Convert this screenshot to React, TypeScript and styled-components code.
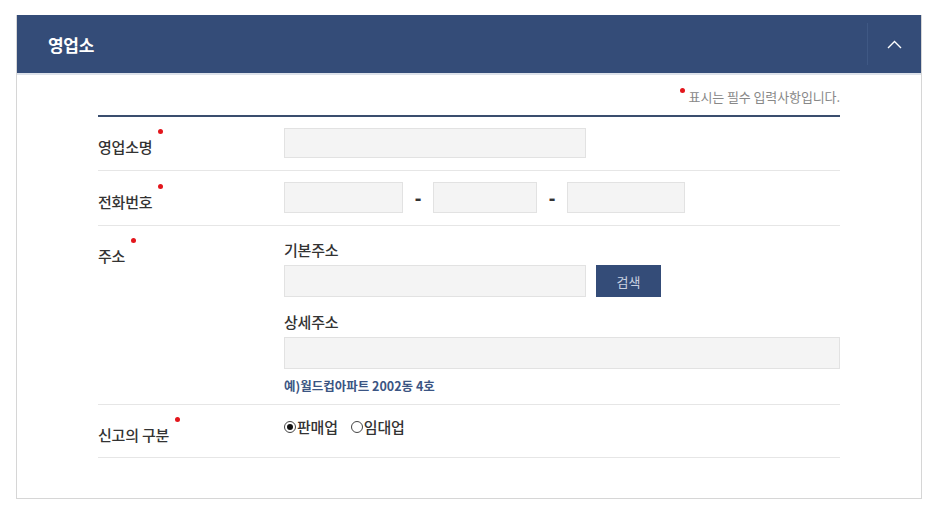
import React from 'react'
import styled, { createGlobalStyle } from 'styled-components'

const GlobalStyle = createGlobalStyle`
  html, body {
    margin: 0;
    padding: 0;
    background: #fff;
  }
  body {
    font-family: "Noto Sans CJK KR", "Noto Sans", sans-serif;
    color: #333;
  }
`

const Page = styled.div`
  padding: 15px 14px 11px 16px;
`

const Panel = styled.section`
  border: 1px solid #d6d6d6;
  border-top: none;
  background: #fff;
`

const Header = styled.header`
  display: flex;
  align-items: center;
  height: 58px;
  background: #344c78;
  border-bottom: 2px solid #dde2ea;
`

const Title = styled.h2`
  flex: 1;
  margin: 0;
  padding-left: 31px;
  font-size: 17px;
  font-weight: 700;
  color: #fff;
  letter-spacing: -0.3px;
`

const Toggle = styled.button`
  display: flex;
  align-items: center;
  justify-content: center;
  width: 54px;
  height: 42px;
  padding: 0;
  border: none;
  border-left: 1px solid #3f5884;
  background: transparent;
  cursor: pointer;
`

const ChevronUp = () => (
  <svg width="15" height="9" viewBox="0 0 15 9" fill="none">
    <polyline points="1,8 7.5,1.5 14,8" stroke="#fff" strokeWidth="1.4" />
  </svg>
)

const Body = styled.div`
  padding: 14px 81px 40px 81px;
`

const Note = styled.p`
  margin: 0 0 10px;
  text-align: right;
  font-size: 13px;
  line-height: 16px;
  color: #888;
  letter-spacing: -0.1px;
`

const Required = styled.span`
  position: relative;
  display: inline-block;
  &::after {
    content: '';
    position: absolute;
    right: -11px;
    top: -8px;
    width: 5px;
    height: 5px;
    border-radius: 50%;
    background: #e3161c;
  }
`

const NoteDot = styled.span`
  position: relative;
  display: inline-block;
  width: 5px;
  height: 5px;
  margin-right: 4px;
  top: -9px;
  border-radius: 50%;
  background: #e3161c;
`

const Table = styled.div`
  border-top: 2px solid #3a4e6e;
`

const Row = styled.div<{ $pt?: number; $pb?: number }>`
  display: grid;
  grid-template-columns: 186px 1fr;
  padding: ${p => p.$pt ?? 11}px 0 ${p => p.$pb ?? 12}px;
  border-bottom: 1px solid #e6e6e6;
`

const Label = styled.div<{ $top?: boolean }>`
  align-self: ${p => (p.$top ? 'start' : 'center')};
  padding-top: ${p => (p.$top ? 6 : 8)}px;
  font-size: 15px;
  line-height: 20px;
  font-weight: 500;
  color: #333;
  letter-spacing: -0.2px;
`

const Field = styled.div`
  display: flex;
  flex-direction: column;
`

const Line = styled.div`
  display: flex;
  align-items: center;
`

const Input = styled.input<{ $w?: number; $h?: number }>`
  box-sizing: border-box;
  width: ${p => (p.$w ? `${p.$w}px` : '100%')};
  height: ${p => p.$h ?? 30}px;
  margin: 0;
  padding: 0 8px;
  border: 1px solid #e2e2e2;
  background: #f4f4f4;
  font-family: inherit;
  font-size: 13px;
  outline: none;
`

const Dash = styled.span`
  width: 30px;
  text-align: center;
  font-family: "Liberation Sans", sans-serif;
  font-size: 20px;
  line-height: 20px;
  font-weight: 700;
  color: #333;
`

const SubLabel = styled.div<{ $mt?: number }>`
  margin-top: ${p => p.$mt ?? 0}px;
  margin-bottom: 5px;
  font-size: 15px;
  line-height: 20px;
  font-weight: 500;
  color: #333;
  letter-spacing: -0.2px;
`

const SearchButton = styled.button`
  width: 65px;
  height: 32px;
  margin-left: 10px;
  border: none;
  background: #344c78;
  color: #c9d1e0;
  font-family: inherit;
  font-size: 13px;
  cursor: pointer;
`

const Hint = styled.p`
  margin: 9px 0 0;
  font-size: 12.5px;
  line-height: 16px;
  font-weight: 700;
  color: #3b5583;
`

const RadioGroup = styled.div`
  display: flex;
  align-items: flex-start;
  gap: 13px;
  height: 28px;
`

const RadioItem = styled.label`
  display: flex;
  align-items: center;
  font-size: 15px;
  line-height: 20px;
  font-weight: 500;
  color: #333;
  letter-spacing: -0.2px;
  cursor: pointer;
`

const RadioMark = styled.span<{ $on?: boolean }>`
  box-sizing: border-box;
  position: relative;
  width: 12px;
  height: 12px;
  margin-right: 1px;
  border: 1px solid #444;
  border-radius: 50%;
  &::after {
    content: '';
    display: ${p => (p.$on ? 'block' : 'none')};
    position: absolute;
    left: 2px;
    top: 2px;
    width: 6px;
    height: 6px;
    border-radius: 50%;
    background: #111;
  }
`

export default function App() {
  const [kind, setKind] = React.useState('sale')
  return (
    <Page>
      <GlobalStyle />
      <Panel>
        <Header>
          <Title>영업소</Title>
          <Toggle aria-label="접기">
            <ChevronUp />
          </Toggle>
        </Header>
        <Body>
          <Note>
            <NoteDot />
            표시는 필수 입력사항입니다.
          </Note>
          <Table>
            <Row>
              <Label>
                <Required>영업소명</Required>
              </Label>
              <Line>
                <Input $w={302} />
              </Line>
            </Row>
            <Row>
              <Label>
                <Required>전화번호</Required>
              </Label>
              <Line>
                <Input $w={119} $h={31} />
                <Dash>-</Dash>
                <Input $w={104} $h={31} />
                <Dash>-</Dash>
                <Input $w={118} $h={31} />
              </Line>
            </Row>
            <Row $pt={14} $pb={10}>
              <Label $top>
                <Required>주소</Required>
              </Label>
              <Field>
                <SubLabel>기본주소</SubLabel>
                <Line>
                  <Input $w={302} $h={32} />
                  <SearchButton>검색</SearchButton>
                </Line>
                <SubLabel $mt={15}>상세주소</SubLabel>
                <Input $h={32} />
                <Hint>예)월드컵아파트 2002동 4호</Hint>
              </Field>
            </Row>
            <Row $pt={12} $pb={12}>
              <Label>
                <Required>신고의 구분</Required>
              </Label>
              <RadioGroup>
                <RadioItem onClick={() => setKind('sale')}>
                  <RadioMark $on={kind === 'sale'} />
                  판매업
                </RadioItem>
                <RadioItem onClick={() => setKind('rent')}>
                  <RadioMark $on={kind === 'rent'} />
                  임대업
                </RadioItem>
              </RadioGroup>
            </Row>
          </Table>
        </Body>
      </Panel>
    </Page>
  )
}
